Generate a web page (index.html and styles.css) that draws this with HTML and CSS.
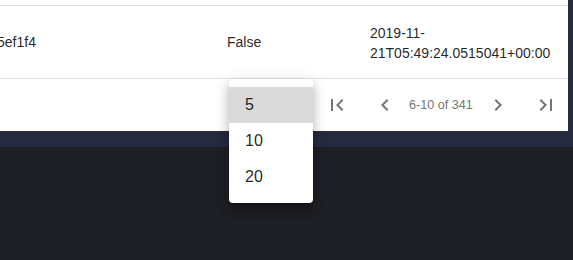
FILE: index.html
```html
<!DOCTYPE html>
<html>
<head>
<meta charset="utf-8">
<link rel="stylesheet" href="styles.css">
</head>
<body>
<div class="frame">
  <div class="card">
    <div class="row">
      <div class="cell id">5ef1f4</div>
      <div class="cell bool">False</div>
      <div class="cell date">2019-11-<br>21T05:49:24.0515041+00:00</div>
    </div>
    <div class="footer">
      <div class="pager">
        <span class="icon first"><svg viewBox="0 0 24 24" width="24" height="24"><path d="M18.41 16.59L13.82 12l4.59-4.59L17 6l-6 6 6 6zM6 6h2v12H6z"/></svg></span>
        <span class="icon prev"><svg viewBox="0 0 24 24" width="24" height="24"><path d="M15.41 16.59L10.83 12l4.58-4.59L14 6l-6 6 6 6z"/></svg></span>
        <span class="range">6-10 of 341</span>
        <span class="icon next"><svg viewBox="0 0 24 24" width="24" height="24"><path d="M8.59 16.59L13.17 12 8.59 7.41 10 6l6 6-6 6z"/></svg></span>
        <span class="icon last"><svg viewBox="0 0 24 24" width="24" height="24"><path d="M5.59 7.41L10.18 12l-4.59 4.59L7 18l6-6-6-6zM16 6h2v12h-2z"/></svg></span>
      </div>
    </div>
  </div>
</div>
<ul class="menu">
  <li class="item selected">5</li>
  <li class="item">10</li>
  <li class="item">20</li>
</ul>
</body>
</html>
```
FILE: styles.css
```css
html, body {
  margin: 0;
  padding: 0;
}
body {
  background: #1e1f24;
  font-family: "Liberation Sans", Arial, sans-serif;
  width: 573px;
  height: 260px;
  overflow: hidden;
  position: relative;
}
.frame {
  background: #262a3e;
  height: 147px;
  width: 573px;
}
.card {
  background: #ffffff;
  width: 568px;
  height: 131px;
  display: flex;
  flex-direction: column;
  overflow: hidden;
}
.row {
  margin-top: 5px;
  border-top: 1px solid #e0e0e0;
  border-bottom: 1px solid #e0e0e0;
  height: 72px;
  display: flex;
  align-items: center;
  font-size: 14px;
  color: rgba(0, 0, 0, 0.87);
}
.cell.id {
  width: 227px;
  margin-left: -3px;
  flex: none;
}
.cell.bool {
  width: 143px;
  margin-left: 3px;
  flex: none;
}
.cell.date {
  line-height: 20px;
  padding-top: 1px;
  white-space: nowrap;
}
.footer {
  flex: 1;
  display: flex;
  justify-content: flex-end;
  align-items: center;
  padding-right: 10px;
  padding-bottom: 1px;
}
.pager {
  display: flex;
  align-items: center;
}
.icon {
  width: 24px;
  height: 24px;
  display: flex;
}
.icon svg {
  fill: #757575;
}
.icon.prev {
  margin-left: 24px;
}
.range {
  font-size: 12.6px;
  color: #757575;
  margin-left: 12px;
  margin-right: 13px;
  width: 64px;
  white-space: nowrap;
}
.icon.last {
  margin-left: 24px;
}
.menu {
  position: absolute;
  left: 229px;
  top: 79px;
  width: 84px;
  margin: 0;
  padding: 8px 0;
  list-style: none;
  background: #ffffff;
  border-radius: 4px;
  box-shadow: 0 5px 5px -3px rgba(0,0,0,0.2), 0 8px 10px 1px rgba(0,0,0,0.14), 0 3px 14px 2px rgba(0,0,0,0.12);
}
.item {
  height: 36px;
  line-height: 36px;
  padding-left: 16px;
  font-size: 16px;
  color: rgba(0, 0, 0, 0.87);
}
.item.selected {
  background: #dadada;
}
```
